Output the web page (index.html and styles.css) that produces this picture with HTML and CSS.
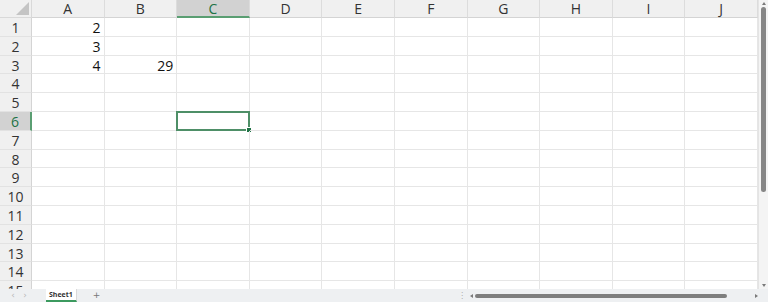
FILE: index.html
```html
<!DOCTYPE html>
<html>
<head>
<meta charset="utf-8">
<link rel="stylesheet" href="styles.css">
</head>
<body>
<div class="app">
  <div class="main">
    <div class="sheet">
      <div class="corner"><span class="tri"></span></div>
      <div class="ch">A</div><div class="ch">B</div><div class="ch sel">C</div><div class="ch">D</div><div class="ch">E</div><div class="ch">F</div><div class="ch">G</div><div class="ch">H</div><div class="ch">I</div><div class="ch">J</div>

      <div class="rh">1</div><div class="c num">2</div><div class="c"></div><div class="c"></div><div class="c"></div><div class="c"></div><div class="c"></div><div class="c"></div><div class="c"></div><div class="c"></div><div class="c"></div>
      <div class="rh">2</div><div class="c num">3</div><div class="c"></div><div class="c"></div><div class="c"></div><div class="c"></div><div class="c"></div><div class="c"></div><div class="c"></div><div class="c"></div><div class="c"></div>
      <div class="rh">3</div><div class="c num">4</div><div class="c num">29</div><div class="c"></div><div class="c"></div><div class="c"></div><div class="c"></div><div class="c"></div><div class="c"></div><div class="c"></div><div class="c"></div>
      <div class="rh">4</div><div class="c"></div><div class="c"></div><div class="c"></div><div class="c"></div><div class="c"></div><div class="c"></div><div class="c"></div><div class="c"></div><div class="c"></div><div class="c"></div>
      <div class="rh">5</div><div class="c"></div><div class="c"></div><div class="c"></div><div class="c"></div><div class="c"></div><div class="c"></div><div class="c"></div><div class="c"></div><div class="c"></div><div class="c"></div>
      <div class="rh sel">6</div><div class="c"></div><div class="c"></div><div class="c active"><span class="handle"></span></div><div class="c"></div><div class="c"></div><div class="c"></div><div class="c"></div><div class="c"></div><div class="c"></div><div class="c"></div>
      <div class="rh">7</div><div class="c"></div><div class="c"></div><div class="c"></div><div class="c"></div><div class="c"></div><div class="c"></div><div class="c"></div><div class="c"></div><div class="c"></div><div class="c"></div>
      <div class="rh">8</div><div class="c"></div><div class="c"></div><div class="c"></div><div class="c"></div><div class="c"></div><div class="c"></div><div class="c"></div><div class="c"></div><div class="c"></div><div class="c"></div>
      <div class="rh">9</div><div class="c"></div><div class="c"></div><div class="c"></div><div class="c"></div><div class="c"></div><div class="c"></div><div class="c"></div><div class="c"></div><div class="c"></div><div class="c"></div>
      <div class="rh">10</div><div class="c"></div><div class="c"></div><div class="c"></div><div class="c"></div><div class="c"></div><div class="c"></div><div class="c"></div><div class="c"></div><div class="c"></div><div class="c"></div>
      <div class="rh">11</div><div class="c"></div><div class="c"></div><div class="c"></div><div class="c"></div><div class="c"></div><div class="c"></div><div class="c"></div><div class="c"></div><div class="c"></div><div class="c"></div>
      <div class="rh">12</div><div class="c"></div><div class="c"></div><div class="c"></div><div class="c"></div><div class="c"></div><div class="c"></div><div class="c"></div><div class="c"></div><div class="c"></div><div class="c"></div>
      <div class="rh">13</div><div class="c"></div><div class="c"></div><div class="c"></div><div class="c"></div><div class="c"></div><div class="c"></div><div class="c"></div><div class="c"></div><div class="c"></div><div class="c"></div>
      <div class="rh">14</div><div class="c"></div><div class="c"></div><div class="c"></div><div class="c"></div><div class="c"></div><div class="c"></div><div class="c"></div><div class="c"></div><div class="c"></div><div class="c"></div>
      <div class="rh">15</div><div class="c"></div><div class="c"></div><div class="c"></div><div class="c"></div><div class="c"></div><div class="c"></div><div class="c"></div><div class="c"></div><div class="c"></div><div class="c"></div>
    </div>
    <div class="vscroll">
      <span class="arr up"></span>
      <div class="vtrack"><div class="vthumb"></div></div>
      <span class="arr down"></span>
    </div>
  </div>
  <div class="bottom">
    <div class="tabs">
      <span class="nav">&lsaquo;</span>
      <span class="nav">&rsaquo;</span>
      <span class="tab">Sheet1</span>
      <span class="plus">+</span>
    </div>
    <div class="hscroll">
      <span class="grip">⋮</span>
      <span class="arr left"></span>
      <div class="htrack"><div class="hthumb"></div></div>
      <span class="arr right"></span>
    </div>
  </div>
</div>
</body>
</html>
```
FILE: styles.css
```css
html, body {
  margin: 0;
  padding: 0;
  background: #ffffff;
}
.app {
  width: 768px;
  height: 302px;
  display: flex;
  flex-direction: column;
  overflow: hidden;
  font-family: "Open Sans", "Noto Sans", sans-serif;
}
.main {
  display: flex;
  height: 289px;
  overflow: hidden;
}
.sheet {
  width: 758px;
  display: grid;
  grid-template-columns: 32px repeat(10, 72.6px);
  grid-template-rows: 18px repeat(15, 18.8px);
  overflow: hidden;
}
.corner {
  background: #f0f0f0;
  border-right: 1px solid #d9d9d9;
  border-bottom: 1px solid #d9d9d9;
  box-sizing: border-box;
  position: relative;
}
.tri {
  position: absolute;
  right: 2px;
  bottom: 2px;
  width: 0;
  height: 0;
  border-left: 13px solid transparent;
  border-bottom: 13px solid #c4c4c4;
}
.ch {
  background: #f0f0f0;
  border-right: 1px solid #dcdcdc;
  border-bottom: 1px solid #d4d4d4;
  box-sizing: border-box;
  color: #333;
  font-size: 14px;
  line-height: 18px;
  text-align: center;
}
.ch.sel {
  background: #d2d2d2;
  color: #217346;
  border-bottom: 2px solid #5a9e72;
}
.rh {
  background: #f0f0f0;
  border-right: 1px solid #d4d4d4;
  border-bottom: 1px solid #e2e2e2;
  box-sizing: border-box;
  color: #333;
  font-size: 14px;
  line-height: 19px;
  text-align: center;
}
.rh.sel {
  background: #d2d2d2;
  color: #217346;
  border-right: 2px solid #5a9e72;
}
.c {
  border-right: 1px solid #e6e6e6;
  border-bottom: 1px solid #e6e6e6;
  box-sizing: border-box;
  font-size: 14px;
  line-height: 19px;
  color: #111;
  position: relative;
}
.num {
  text-align: right;
  padding-right: 3px;
}
.active {
  border: 2px solid #4e8f67;
  margin: -1px 0 0 -1px;
  width: calc(100% + 1px);
  height: calc(100% + 1px);
}
.handle {
  position: absolute;
  right: -4px;
  bottom: -4px;
  width: 4px;
  height: 4px;
  background: #217346;
  border: 1px solid #ffffff;
}
.vscroll {
  width: 10px;
  background: #f4f4f4;
  border-left: 1px solid #e4e4e4;
  box-sizing: border-box;
  display: flex;
  flex-direction: column;
  align-items: center;
  padding: 2px 0 2px;
}
.vtrack {
  flex: 1;
  width: 100%;
  display: flex;
  justify-content: center;
  padding-top: 2px;
}
.vthumb {
  width: 5px;
  height: 185px;
  background: #868686;
  border-radius: 3px;
}
.arr {
  width: 0;
  height: 0;
  display: block;
}
.arr.up {
  border-left: 2px solid transparent;
  border-right: 2px solid transparent;
  border-bottom: 3px solid #7a7a7a;
}
.arr.down {
  border-left: 2px solid transparent;
  border-right: 2px solid transparent;
  border-top: 3px solid #7a7a7a;
}
.bottom {
  height: 13px;
  background: #eef0f2;
  display: flex;
  align-items: center;
}
.tabs {
  width: 458px;
  display: flex;
  align-items: center;
  height: 100%;
}
.nav {
  font-size: 9px;
  line-height: 13px;
  color: #b8b8b8;
  width: 12px;
  text-align: center;
  font-family: "DejaVu Sans", sans-serif;
}
.nav:first-child {
  margin-left: 7px;
}
.tab {
  margin-left: 15px;
  background: #ffffff;
  height: 100%;
  box-sizing: border-box;
  padding: 0 3px;
  font-size: 7px;
  font-weight: bold;
  line-height: 11px;
  color: #333;
  border-bottom: 2px solid #3c9a5f;
  border-right: 1px solid #dadada;
}
.plus {
  margin-left: 16px;
  font-size: 9px;
  line-height: 13px;
  color: #777;
  font-family: "DejaVu Sans", sans-serif;
}
.hscroll {
  flex: 1;
  display: flex;
  align-items: center;
  height: 100%;
  padding-right: 10px;
}
.grip {
  font-size: 8px;
  line-height: 13px;
  color: #aaa;
  width: 8px;
  font-family: "DejaVu Sans", sans-serif;
}
.arr.left {
  margin-left: 4px;
  border-top: 2px solid transparent;
  border-bottom: 2px solid transparent;
  border-right: 3px solid #7a7a7a;
}
.arr.right {
  border-top: 2px solid transparent;
  border-bottom: 2px solid transparent;
  border-left: 3px solid #7a7a7a;
}
.htrack {
  flex: 1;
  padding: 0 28px 0 2px;
}
.hthumb {
  height: 4px;
  background: #7e7e7e;
  border-radius: 2px;
}
```
